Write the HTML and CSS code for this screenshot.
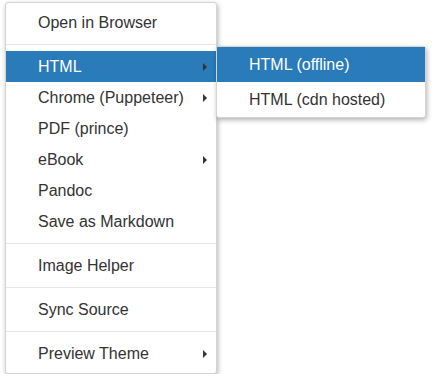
FILE: index.html
```html
<!DOCTYPE html>
<html lang="en">
<head>
    <meta charset="UTF-8">
    <title>Preview Menu</title>
    <link rel="stylesheet" href="styles.css">
</head>
<body>
    <ul class="menu">
        <li class="item">Open in Browser</li>
        <li class="divider"></li>
        <li class="item has-sub active">
            <span>HTML</span><span class="caret"></span>
            <ul class="menu submenu">
                <li class="item active">HTML (offline)</li>
                <li class="item">HTML (cdn hosted)</li>
            </ul>
        </li>
        <li class="item has-sub"><span>Chrome (Puppeteer)</span><span class="caret"></span></li>
        <li class="item">PDF (prince)</li>
        <li class="item has-sub"><span>eBook</span><span class="caret"></span></li>
        <li class="item">Pandoc</li>
        <li class="item">Save as Markdown</li>
        <li class="divider"></li>
        <li class="item">Image Helper</li>
        <li class="divider"></li>
        <li class="item">Sync Source</li>
        <li class="divider"></li>
        <li class="item has-sub"><span>Preview Theme</span><span class="caret"></span></li>
    </ul>
</body>
</html>
```

FILE: styles.css
```css
body {
    margin: 0;
    background-color: white;
    font-family: "Liberation Sans", Arial, sans-serif;
    font-size: 16px;
    color: #333;
}

.menu {
    list-style: none;
    margin: 2px 0 0 5px;
    padding: 4px 0;
    width: 212px;
    box-sizing: border-box;
    background-color: white;
    border: 1px solid #d4d4d4;
    border-radius: 3px;
    box-shadow: 1px 2px 5px rgba(0,0,0,0.3);
}

.item {
    position: relative;
    height: 31px;
    line-height: 31px;
    padding: 0 9px 0 32px;
    display: flex;
    align-items: center;
    justify-content: space-between;
    white-space: nowrap;
}

.item.active {
    background-color: #2a7bb9;
    color: white;
}

.caret {
    width: 0;
    height: 0;
    border-left: 4px solid #333;
    border-top: 4px solid transparent;
    border-bottom: 4px solid transparent;
}

.divider {
    height: 1px;
    margin: 6px 0;
    background-color: #e5e5e5;
}

.submenu {
    position: absolute;
    top: -5px;
    left: 100%;
    margin: 0;
    padding: 0;
    width: 210px;
    color: #333;
    z-index: 1;
}

.submenu .item {
    height: 35px;
    line-height: 35px;
}
```
